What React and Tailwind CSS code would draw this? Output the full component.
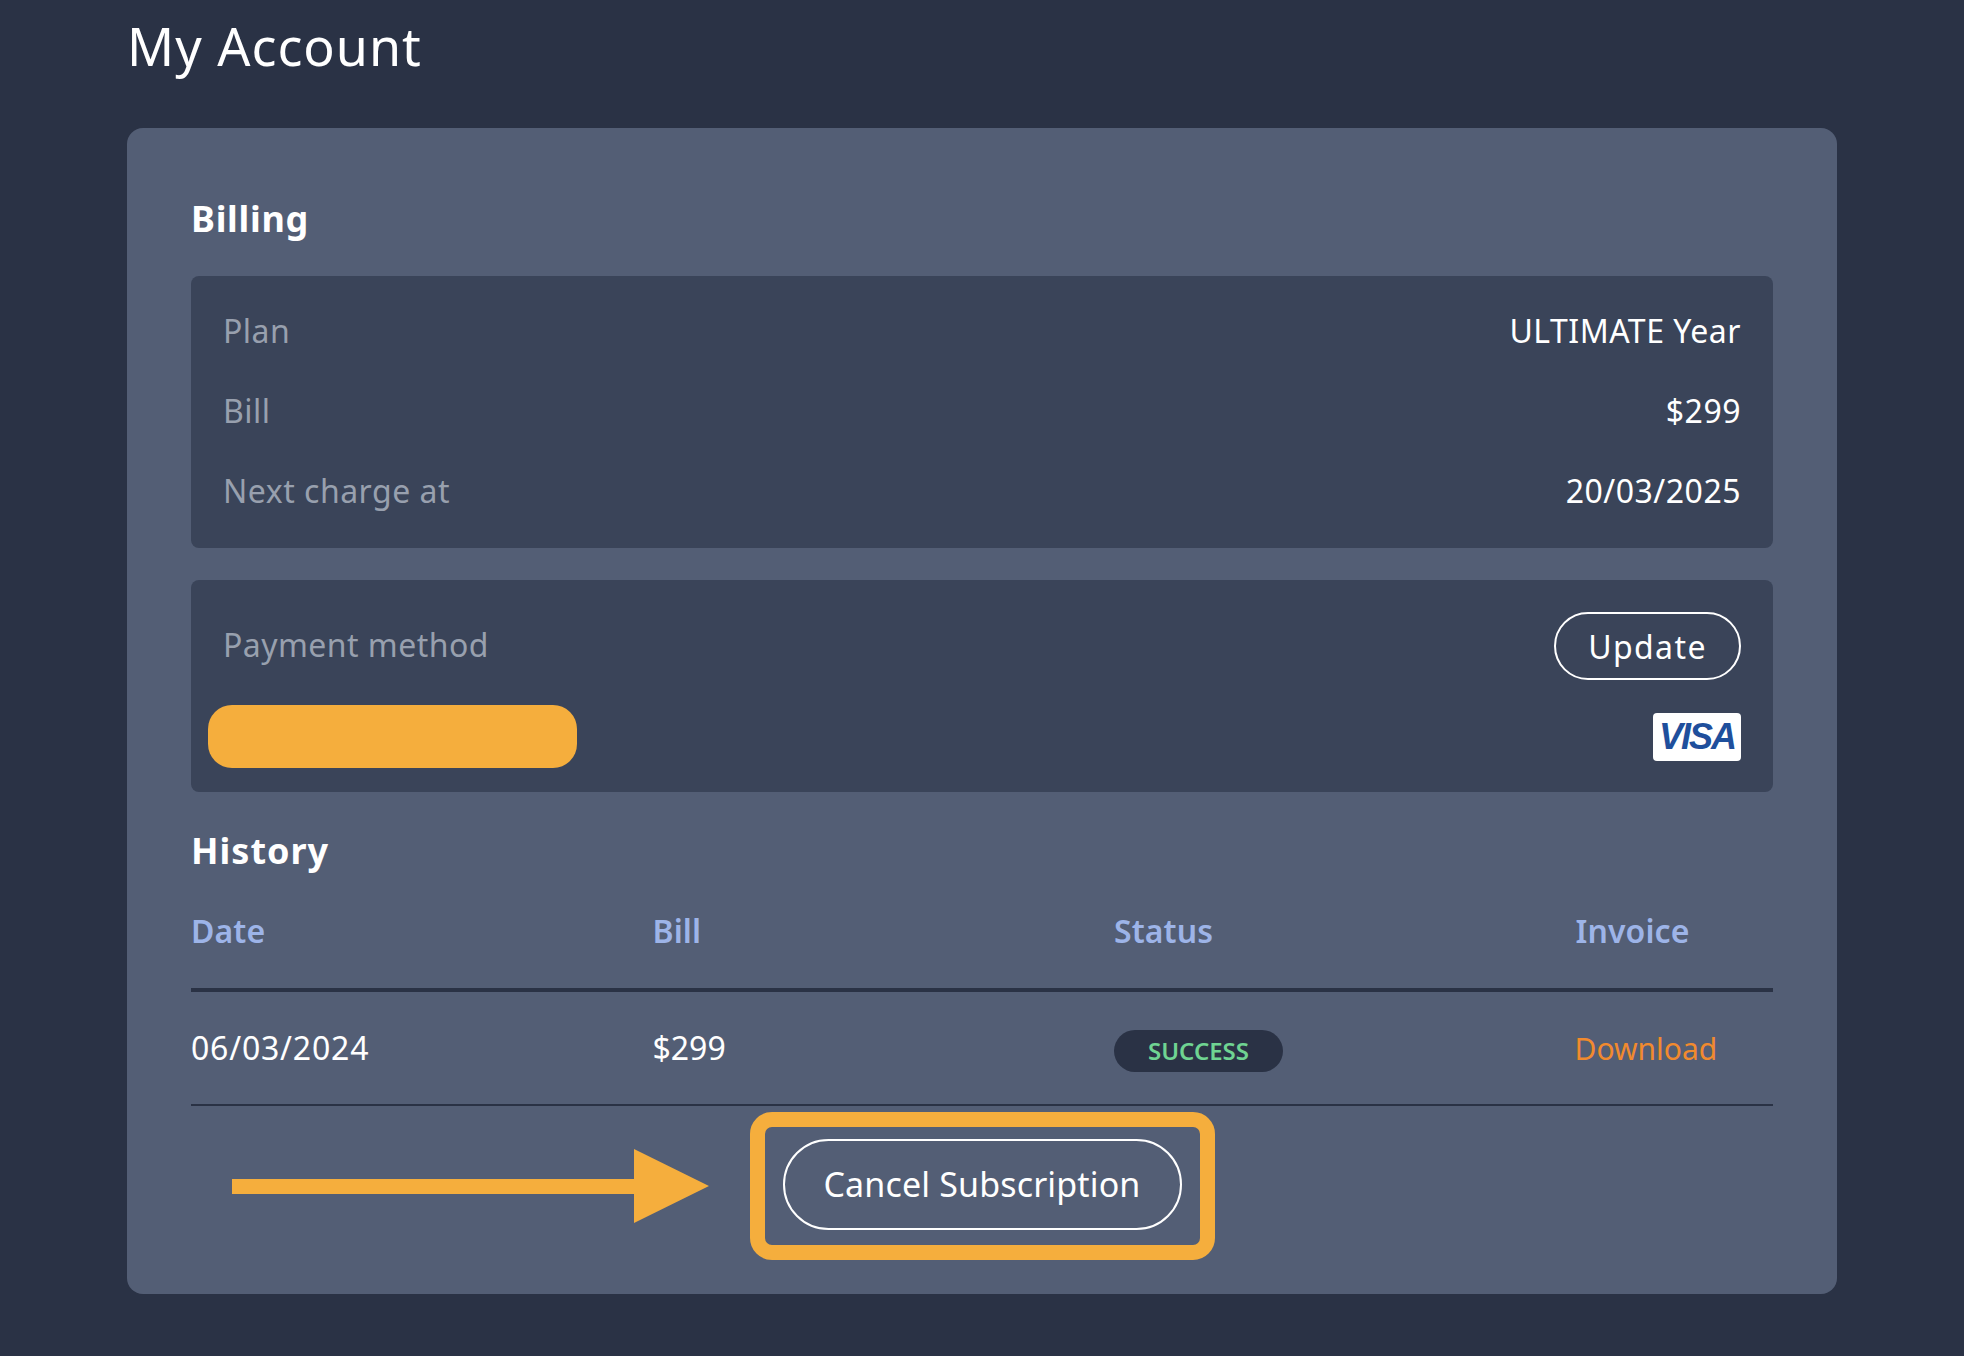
import React from 'react';

const rows = [
  ['Plan', 'ULTIMATE Year'],
  ['Bill', '$299'],
  ['Next charge at', '20/03/2025'],
];

const colsClass = 'grid grid-cols-[461.5px_461.5px_461.5px_1fr]';

const App = () => {
  return (
    <div className="relative min-h-[1356px] bg-[#2a3245] px-[127px] text-white font-['Noto_Sans',sans-serif]">
      <h1 className="h-[128px] pt-[13px] text-[52px] leading-[66px] tracking-[1px]">My Account</h1>

      {/* Card */}
      <div className="relative h-[1166px] w-[1710px] rounded-2xl bg-[#535e75] px-16">
        <h2 className="pt-[71px] pb-px text-[36px] font-bold leading-10 tracking-[0.7px]">Billing</h2>

        <div className="mt-9 rounded-lg bg-[#3a4459] px-8 py-4">
          {rows.map(([label, value]) => (
            <div key={label} className="flex h-20 items-center justify-between pb-0.5 text-[32px] tracking-[0.5px]">
              <span className="text-[#98a0ae]">{label}</span>
              <span>{value}</span>
            </div>
          ))}
        </div>

        {/* Payment method */}
        <div className="mt-8 h-[212px] rounded-lg bg-[#3a4459] px-8 pt-8">
          <div className="flex h-[68px] items-center justify-between">
            <span className="pb-0.5 text-[32px] tracking-[0.45px] text-[#98a0ae]">Payment method</span>
            <button className="h-[68px] w-[187px] rounded-full border-2 border-white pt-0.5 text-[32px] tracking-[1.4px]">Update</button>
          </div>
          <div className="mt-[25px] flex items-center justify-between">
            <div className="-ml-[15px] h-[63px] w-[369px] rounded-3xl bg-[#f5ae3d]" />
            <div className="flex h-12 w-[88px] items-center justify-center rounded bg-white text-[36px] font-bold italic tracking-[-2px] text-[#1f4f9c] font-['Liberation_Sans',sans-serif]">
              VISA
            </div>
          </div>
        </div>

        {/* History */}
        <h2 className="mt-[39px] pb-px text-[36px] font-bold leading-10 tracking-[1px]">History</h2>
        <div className={`${colsClass} mt-[39px] h-[81px] border-b-4 border-[#2a3245] text-[32px] font-semibold leading-10 tracking-[0.1px] text-[#9db4e8]`}>
          <span>Date</span>
          <span>Bill</span>
          <span>Status</span>
          <span>Invoice</span>
        </div>
        <div className={`${colsClass} h-[114px] items-center border-b-2 border-[#2a3245] text-[32px] tracking-[0.8px]`}>
          <span>06/03/2024</span>
          <span className="tracking-normal">$299</span>
          <span>
            <span className="mt-[6px] flex h-[42px] w-[169px] items-center justify-center rounded-full bg-[#2a3245] text-[24px] font-semibold tracking-normal text-[#6fd492]">
              SUCCESS
            </span>
          </span>
          <span className="-ml-px text-[30px] tracking-normal text-[#f18a2e]">Download</span>
        </div>

        {/* Cancel */}
        <div className="mt-[6px] flex justify-center">
          <div className="flex h-[148px] w-[465px] items-center justify-center rounded-[22px] border-[15px] border-[#f5ae3d]">
            <button className="mb-1 h-[91px] w-[399px] rounded-full border-2 border-white text-[34px] tracking-[0.15px]">Cancel Subscription</button>
          </div>
        </div>

        <svg className="absolute left-[105px] top-[1021px]" width="477" height="74" viewBox="0 0 477 74">
          <path d="M0 30H402V0L477 37L402 74V45H0Z" fill="#f5ae3d" />
        </svg>
      </div>
    </div>
  );
};

export default App;
